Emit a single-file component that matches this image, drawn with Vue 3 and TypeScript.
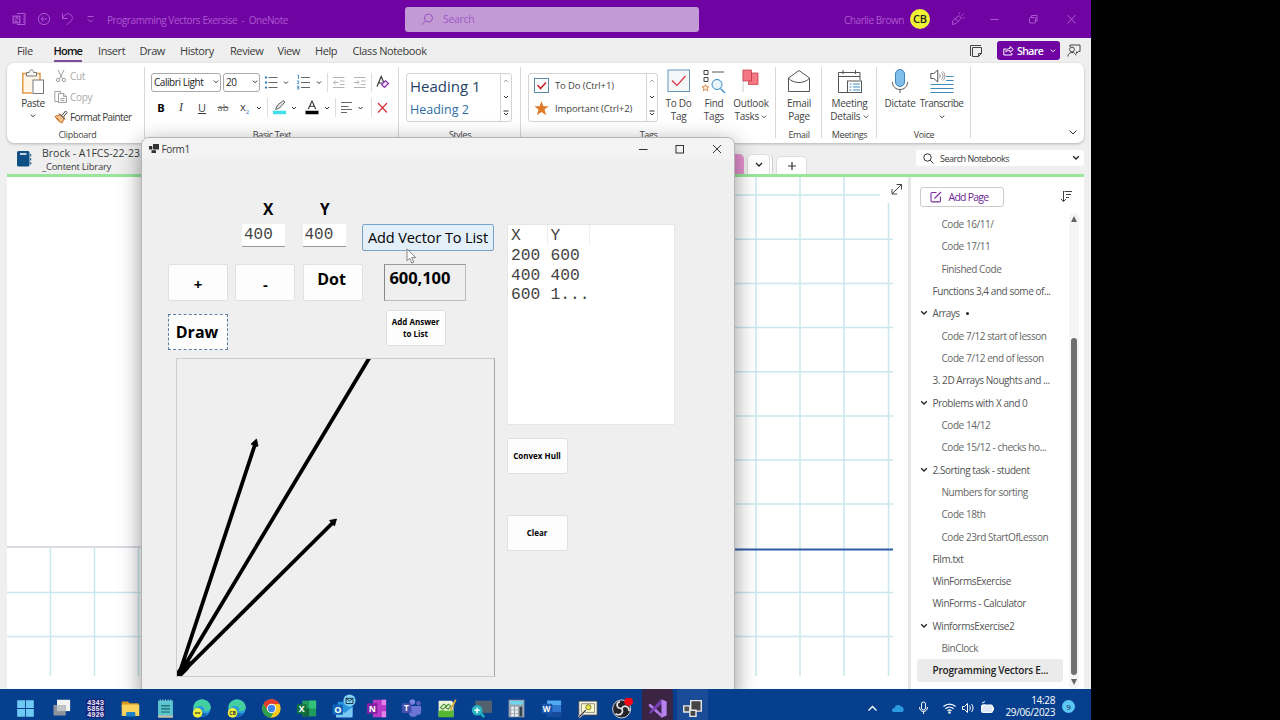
<script setup lang="ts">
interface PageRow { text: string; level: number; open?: boolean; dot?: boolean; active?: boolean }

const tabs: string[] = ['File', 'Home', 'Insert', 'Draw', 'History', 'Review', 'View', 'Help', 'Class Notebook']

const pages: PageRow[] = [
  { text: 'Code 16/11/', level: 2 },
  { text: 'Code 17/11', level: 2 },
  { text: 'Finished Code', level: 2 },
  { text: 'Functions 3,4 and some of...', level: 1 },
  { text: 'Arrays', level: 1, open: true, dot: true },
  { text: 'Code 7/12 start of lesson', level: 2 },
  { text: 'Code 7/12 end of lesson', level: 2 },
  { text: '3. 2D Arrays Noughts and ...', level: 1 },
  { text: 'Problems with X and 0', level: 1, open: true },
  { text: 'Code 14/12', level: 2 },
  { text: 'Code 15/12 - checks ho...', level: 2 },
  { text: '2.Sorting task - student', level: 1, open: true },
  { text: 'Numbers for sorting', level: 2 },
  { text: 'Code 18th', level: 2 },
  { text: 'Code 23rd StartOfLesson', level: 2 },
  { text: 'Film.txt', level: 1 },
  { text: 'WinFormsExercise', level: 1 },
  { text: 'WinForms - Calculator', level: 1 },
  { text: 'WinformsExercise2', level: 1, open: true },
  { text: 'BinClock', level: 2 },
  { text: 'Programming Vectors E...', level: 1, active: true },
]

const vectors: [string, string][] = [['200', '600'], ['400', '400'], ['600', '1...']]
const gridX: number[] = [43.5, 87.5, 131.5, 749, 793, 837]
const gridY: number[] = [18, 62.3, 106.5, 150.6, 194.8, 239, 283, 327]
</script>

<template>
  <div class="screen">
    <div class="desktop">
      <header class="titlebar">
        <svg class="quick" width="107" height="38" viewBox="0 0 107 38" fill="none" stroke="#ad58d3" stroke-width="1">
          <path d="M17 13.500h8v11h-8M25 16h-2M25 19h-2M25 22h-2" />
          <rect x="12.500" y="15.500" width="8" height="8" fill="#a44ccc" stroke="none" />
          <path d="M14.700 22v-5l3.600 5v-5" stroke="#7004a2" />
          <circle cx="44" cy="19" r="5.600" />
          <path d="M47 19h-6m2.500-2.500L41 19l2.500 2.500" />
          <path d="M62.500 13.500v5h5M62.800 18c2-4 5-5 7.500-3.500 2.800 1.800 2.500 4.500.5 6.500l-4 4" />
          <path d="M87.500 16.500h6M88 19.500l2.500 2.500 2.500-2.500" />
        </svg>
        <span class="doc-title">Programming Vectors Exersise&nbsp; -&nbsp; OneNote</span>
        <div class="search">
          <svg width="13" height="13" viewBox="0 0 13 13" fill="none" stroke="#9a51bf"><circle cx="7.500" cy="5" r="4" /><path d="M4.600 7.800L.8 11.800" /></svg>
          <span>Search</span>
        </div>
        <span class="user">Charlie Brown</span>
        <span class="avatar">CB</span>
        <svg class="caption" width="160" height="38" viewBox="931 0 160 38" fill="none" stroke="#ad58d3">
          <path d="M952 24.500l1-4 6-5 2.500 2.500-5.500 5.500zM955 18.500l3 3M959 14l1-1.500M961.500 15.500l2-2M963 18l1.500-.5" />
          <path d="M990.500 19.500h8M1067.500 15l8 8.500M1075.500 15l-8 8.500" />
          <rect x="1029.500" y="17.500" width="6" height="5.500" rx="1" /><path d="M1031.500 17v-1.500h5.500v5.500h-1.500" />
        </svg>
      </header>

      <nav class="menu">
        <div class="tabs">
          <span v-for="t in tabs" :key="t" :class="{ on: t === 'Home' }">{{ t }}</span>
        </div>
        <svg width="14" height="14" viewBox="0 0 14 14" fill="none" stroke="#444"><path d="M1.500 12V1.500H12" /><path d="M3.500 3.500h9v6l-3 3h-6zM12.500 9.500h-3v3" /></svg>
        <span class="share">
          <svg width="11" height="11" viewBox="0 0 11 11" fill="none" stroke="#fff"><path d="M3.500 4H.8v6h8V8M2.800 7c.4-2.500 2-3.500 4.200-3.500V1.500L10.300 4.500 7 7.300V5.500C5 5.400 3.800 6 2.800 7z" /></svg>
          Share
          <svg class="chev" width="6" height="4" viewBox="0 0 6 4" fill="none" stroke="#fff"><path d="M.8.600L3 2.800 5.200.600" /></svg>
        </span>
        <svg width="14" height="14" viewBox="0 0 14 14" fill="none" stroke="#444"><path d="M3 3V1h10v6.500h-1.500L9.500 9.500v-2" /><circle cx="5" cy="5.500" r="2.400" /><path d="M.8 12.500C1.200 9.700 3 8.500 5 8.500s3.500 1 4 3" /></svg>
      </nav>

      <section class="ribbon">
        <div class="group clipboard">
          <div class="body">
            <div class="paste">
              <svg width="24" height="26" viewBox="0 0 24 26" fill="none"><path d="M2 5h16.500v6h-7v13H2z" fill="#fff6e8" /><path d="M5 4.500H1.800v19.500H11" stroke="#e29a45" stroke-width="1.500" /><path d="M15 4.500h4V11" stroke="#e29a45" stroke-width="1.500" /><path d="M5.500 7V3.500h2.700c.2-3.500 4.300-3.500 4.500 0h2.800V7z" fill="#f6f6f6" stroke="#777" /><rect x="12" y="11" width="10.500" height="13.500" fill="#fff" stroke="#777" /></svg>
              <span>Paste</span>
              <svg class="chev" width="6" height="4" viewBox="0 0 6 4" fill="none" stroke="#333"><path d="M.8.600L3 2.800 5.200.600" /></svg>
            </div>
            <ul class="clip-list">
              <li class="off"><svg width="14" height="14" viewBox="0 0 14 14" fill="none" stroke="#a0a0a0"><path d="M4 .8l4.500 9M10 .8l-4.500 9" /><circle cx="4" cy="11" r="1.700" /><circle cx="10" cy="11" r="1.700" /></svg>Cut</li>
              <li class="off"><svg width="14" height="14" viewBox="0 0 14 14" fill="none" stroke="#a0a0a0"><path d="M4 11.500H.8V1.500h6v2" /><path d="M4.500 3.500h5l3 3v6h-8zM9.500 3.500v3h3M6.500 8.500h4M6.500 10.500h4" /></svg>Copy</li>
              <li class="fp"><svg width="14" height="14" viewBox="0 0 14 14" fill="none"><path d="M1 6.500l6-2 3.500 3.500L8 13 4.500 11z" fill="#f4c28c" stroke="#cf6a1c" /><path d="M5 3.500l6 6M8 5.500l3.500-4.500 1.500 1.500L9.500 7" stroke="#444" fill="#fff" /><path d="M3 8l2.500 2.500" stroke="#cf6a1c" /></svg>Format Painter</li>
            </ul>
          </div>
          <span class="label">Clipboard</span>
        </div>

        <div class="group basic">
          <div class="body col">
            <div class="trow">
              <span class="combo font">Calibri Light<svg class="chev" width="6" height="4" viewBox="0 0 6 4" fill="none" stroke="#333"><path d="M.8.600L3 2.800 5.200.600" /></svg></span>
              <span class="combo size">20<svg class="chev" width="6" height="4" viewBox="0 0 6 4" fill="none" stroke="#333"><path d="M.8.600L3 2.800 5.200.600" /></svg></span>
              <svg width="132" height="20" viewBox="262 72 132 20" fill="none" stroke="#666">
                <path d="M268.500 77.500h9M268.500 82.500h9M268.500 87.500h9M301 77.500h9M301 82.500h9M301 87.500h9" />
                <path d="M265 76.500h2v2h-2zM265 81.500h2v2h-2zM265 86.500h2v2h-2z" fill="#2d7bb8" stroke="none" />
                <path d="M297.500 75.500l1-.5v4M296.800 81h2v1.500l-1.500 1h1.700M296.800 86h2v3h-2M297 87.500h1.500" stroke="#2d7bb8" stroke-width=".8" />
                <path d="M284 81.500l2 2 2-2M317 81.500l2 2 2-2" stroke="#333" />
                <path d="M327.500 73v19M371.500 73v19" stroke="#ddd" />
                <g stroke="#b4b4b4"><path d="M333 77.500h11.500M340 81h4.500M340 84.500h4.500M333 87.500h11.500M338.500 82.500h-5m2-2l-2 2 2 2" /><path d="M354 77.500h11.500M361 81h4.500M361 84.500h4.500M354 87.500h11.500M354 82.500h5m-2-2l2 2-2 2" /></g>
                <path d="M377 86.500l4.200-10 3.500 8M378.500 83h4" stroke="#333" stroke-width="1.200" /><path d="M381.500 84.500l4-3.700 3 2.700-4 4z" fill="#f3e3fa" stroke="#8a2fb0" stroke-width="1.200" />
              </svg>
            </div>
            <div class="frow">
              <b>B</b><i>I</i><u>U</u><s>ab</s><span class="sub">x<sub>2</sub></span>
              <svg width="138" height="22" viewBox="256 97 138 22" fill="none" stroke="#333">
                <path d="M257 107l2 2 2-2M292 107l2 2 2-2M325 107l2 2 2-2M358.500 107l2 2 2-2" />
                <path d="M267.500 98v19M335.500 98v19M371.500 98v19" stroke="#ddd" />
                <path d="M273 112.500h13" stroke="#3fe0ea" stroke-width="3.500" /><path d="M275.500 109.500l2-4.500 6-4.500 1.500 1.500-5.500 6z" stroke="#666" fill="#ddd" />
                <path d="M305.500 112.500h13" stroke="#000" stroke-width="3.500" /><path d="M308.300 109l3.700-8 3.700 8M309.700 106.200h4.600" stroke-width="1.100" />
                <path d="M341 102.500h11M341 106.500h7.500M341 109.500h11M341 112.500h6" stroke="#666" />
                <path d="M378 103l9 9.500M387 103l-9 9.500" stroke="#d3303c" stroke-width="1.200" />
              </svg>
            </div>
          </div>
          <span class="label">Basic Text</span>
        </div>

        <div class="group styles">
          <div class="body">
            <div class="gallery heads">
              <div class="items"><span class="h1">Heading 1</span><span class="h2">Heading 2</span></div>
              <div class="spin"><svg v-for="n in 3" :key="n" width="8" height="8" viewBox="0 0 8 8" fill="none" :stroke="n === 1 ? '#aaa' : '#333'"><path v-if="n === 1" d="M2 5l2-2 2 2" /><path v-else-if="n === 2" d="M2 3l2 2 2-2" /><path v-else d="M1.500 2h5M2 4l2 2 2-2" /></svg></div>
            </div>
          </div>
          <span class="label">Styles</span>
        </div>

        <div class="group tags">
          <div class="body">
            <div class="gallery tagbox">
              <div class="items">
                <span class="tag"><svg width="15" height="15" viewBox="0 0 15 15" fill="none"><rect x=".5" y=".5" width="14" height="14" stroke="#5a87a8" /><path d="M3.500 7l3 3.500L12 4.500" stroke="#c8232c" stroke-width="1.600" /></svg>To Do (Ctrl+1)</span>
                <span class="tag"><svg width="15" height="15" viewBox="0 0 15 15"><path d="M7.500.3l1.900 5h5.300l-4.200 3.300 1.600 5.600-4.600-3.300-4.600 3.300 1.600-5.600L.3 5.300h5.300z" fill="#e07a28" /></svg>Important (Ctrl+2)</span>
              </div>
              <div class="spin"><svg v-for="n in 3" :key="n" width="8" height="8" viewBox="0 0 8 8" fill="none" :stroke="n === 1 ? '#aaa' : '#333'"><path v-if="n === 1" d="M2 5l2-2 2 2" /><path v-else-if="n === 2" d="M2 3l2 2 2-2" /><path v-else d="M1.500 2h5M2 4l2 2 2-2" /></svg></div>
            </div>
            <div class="big w36">
              <svg width="24" height="24" viewBox="0 0 24 24" fill="none"><rect x="1" y="1" width="21.500" height="21.500" stroke="#6597bd" fill="#f5f6f8" /><path d="M5 11.500l5 5L18.500 7" stroke="#d3303c" stroke-width="1.200" /></svg>
              <span>To Do<br>Tag</span>
            </div>
            <div class="big w35">
              <svg width="24" height="24" viewBox="0 0 24 24" fill="none"><path d="M2 1.500h4v4H2zM2 8.500h4v4H2z" stroke="#444" /><path d="M10 3h12" stroke="#555" /><circle cx="15" cy="15.500" r="5" stroke="#2f86c6" fill="#eaf5fc" /><path d="M18.500 19.500l4.500 4.500" stroke="#2f86c6" stroke-width="1.300" /><path d="M3.500 15.500l.9 2.300h2.300L5 19.300l.7 2.500-2.200-1.400-2.200 1.400.7-2.500-1.800-1.500h2.400z" stroke="#d9772a" stroke-width=".9" /></svg>
              <span>Find<br>Tags</span>
            </div>
            <div class="big w39">
              <svg width="24" height="24" viewBox="0 0 24 24"><path d="M4 1v22" stroke="#ccc" /><path d="M4 1h8.500v3H19v11.500H9.500V12H4z" fill="#f57885" stroke="#c9414f" stroke-width=".8" /><path d="M12.500 4v8h-3" fill="none" stroke="#c9414f" /></svg>
              <span>Outlook<br>Tasks <svg class="chev" width="6" height="4" viewBox="0 0 6 4" fill="none" stroke="#555"><path d="M.8.600L3 2.800 5.200.600" /></svg></span>
            </div>
          </div>
          <span class="label">Tags</span>
        </div>

        <div class="group email">
          <div class="body mid"><div class="big w46">
            <svg width="24" height="24" viewBox="0 0 24 24" fill="none" stroke="#555"><path d="M1.500 9v13.500h21V9L12 1.500zM1.500 9C6 15 18 15 22.500 9" /></svg>
            <span>Email<br>Page</span>
          </div></div>
          <span class="label">Email</span>
        </div>

        <div class="group meet">
          <div class="body mid"><div class="big">
            <svg width="26" height="24" viewBox="0 0 26 24" fill="none" stroke="#555"><path d="M10 23.500H1.500v-20h21.500V11M1.500 7.500h21.500M6 1v4M18.500 1v4" /><rect x="10.500" y="12" width="14" height="11.500" fill="#fff" /><path d="M12.500 15h2M12.500 18h2M12.500 21h2M16 15h7M16 18h7M16 21h7" stroke="#3d8fcc" /></svg>
            <span>Meeting<br>Details <svg class="chev" width="6" height="4" viewBox="0 0 6 4" fill="none" stroke="#555"><path d="M.8.600L3 2.800 5.200.600" /></svg></span>
          </div></div>
          <span class="label">Meetings</span>
        </div>

        <div class="group voice">
          <div class="body">
            <div class="big w41">
              <svg width="24" height="24" viewBox="0 0 24 24" fill="none"><rect x="7.500" y=".5" width="9" height="17" rx="4.500" fill="#7fbdea" stroke="#3d84bd" /><path d="M4.500 13c0 10 15 10 15 0M12 20.500v4" stroke="#555" /></svg>
              <span>Dictate</span>
            </div>
            <div class="big w44">
              <svg width="24" height="24" viewBox="0 0 24 24" fill="none"><path d="M.8 4.500h3l4-3.500v12l-4-3.500h-3z" stroke="#555" /><path d="M9.500 5c1 1 1 3 0 4M11.500 3.500c2 2 2 5 0 7M13 2.500c2.500 2.500 2.500 6.500 0 9" stroke="#777" stroke-width=".8" /><path d="M16 7.500h7.500M16 11.500h7.500M.5 15.500h23M.5 19.500h23M.5 23.500h23" stroke="#3f8bb8" /></svg>
              <span>Transcribe<br><svg class="chev" width="6" height="4" viewBox="0 0 6 4" fill="none" stroke="#333"><path d="M.8.600L3 2.800 5.200.600" /></svg></span>
            </div>
          </div>
          <span class="label">Voice</span>
        </div>
        <svg class="collapse" width="10" height="7" viewBox="0 0 10 7" fill="none" stroke="#333"><path d="M1.500 1.500L5 5l3.500-3.500" /></svg>
      </section>

      <div class="bookbar">
        <svg class="book" width="16" height="18" viewBox="0 0 16 18"><rect x="1" y="1" width="12.500" height="15.500" rx="1.500" fill="#0f4f86" /><path d="M4 4h6.500" stroke="#fff" stroke-width="1.500" /><path d="M14.700 4v2.500M14.700 8v2.500M14.700 12v2.500" stroke="#0f4f86" stroke-width="1" /></svg>
        <div class="bookname">Brock - A1FCS-22-23<br><small>_Content Library</small></div>
        <span class="stab pink"></span>
        <span class="stab drop"><svg width="8" height="6" viewBox="0 0 8 6" fill="none" stroke="#222" stroke-width="1.300"><path d="M1 1l3 3 3-3" /></svg></span>
        <span class="stab add"><svg width="8" height="8" viewBox="0 0 8 8" stroke="#333" stroke-width="1.200"><path d="M4 0v8M0 4h8" /></svg></span>
        <div class="nbsearch">
          <svg width="11" height="11" viewBox="0 0 11 11" fill="none" stroke="#333"><circle cx="4.500" cy="4.500" r="3.700" /><path d="M7.200 7.200l3.300 3.300" /></svg>
          <span>Search Notebooks</span>
          <svg width="8" height="6" viewBox="0 0 8 6" fill="none" stroke="#222" stroke-width="1.300"><path d="M1.200 1.200L4 4l2.800-2.800" /></svg>
        </div>
      </div>

      <main class="work">
        <div class="canvas">
          <svg width="901" height="512" viewBox="0 0 901 512" fill="none" stroke="#c9e8ee" stroke-width="1.500">
            <path v-for="y in gridY" :key="'h' + y" :d="`M727 ${y}H${y === 18 ? 873 : 886}`" />
            <path v-for="x in gridX" :key="'v' + x" :d="`M${x} ${x < 200 ? 371 : 0}V499`" />
            <path d="M881.500 26V499M0 415.500H135M0 459.500H135M727 415.500H886M727 459.500H886" />
            <path d="M0 370H135" stroke="#b9b3c6" stroke-width="1" />
            <path d="M727 372.500H886" stroke="#2f5ca6" stroke-width="2" />
            <path d="M885 17l9.500-9.500M889.500 7.500h5v5M885 12v5h5" stroke="#444" stroke-width="1" />
          </svg>
        </div>
        <aside class="pages">
          <div class="phead">
            <span class="addpage"><svg width="12" height="12" viewBox="0 0 12 12" fill="none" stroke="#7a2aa3" stroke-width="1.100"><path d="M6.500 1.500H2.200C1.500 1.500 1 2 1 2.700v7c0 .7.500 1.200 1.200 1.200h7c.7 0 1.200-.5 1.200-1.200V5.500M4.500 7.500L11 1" /></svg>Add Page</span>
            <svg width="12" height="13" viewBox="0 0 12 13" fill="none" stroke="#444"><path d="M3.500 1v10.500M1 9l2.500 2.500L6 9M4.500 1.500H12M6 4.500h5M6 7.500h3" /></svg>
          </div>
          <div class="plist">
            <ul>
              <li v-for="p in pages" :key="p.text" :class="['l' + p.level, { active: p.active, top: p.open }]">
                <svg v-if="p.open" width="8" height="6" viewBox="0 0 8 6" fill="none" stroke="#222" stroke-width="1.300"><path d="M1.200 1.200L4 4l2.800-2.800" /></svg>
                <span>{{ p.text }}</span><i v-if="p.dot"></i>
              </li>
            </ul>
            <div class="scroll"><span class="up"></span><span class="thumb"></span><span class="down"></span></div>
          </div>
        </aside>
      </main>

      <footer class="taskbar">
        <div class="apps">
          <span class="app"><svg viewBox="0 0 24 24"><path d="M2.500 2.500h9v9h-9zM12.500 2.500h9v9h-9zM2.500 12.500h9v9h-9zM12.500 12.500h9v9h-9z" fill="#6dcaf5" /></svg></span>
          <span class="app"><svg viewBox="0 0 24 24"><path d="M8 2h15v13H8z" fill="#f2f2f2" /><path d="M4 8h14v12H4z" fill="#8e949c" /><path d="M8 8h10v7H8z" fill="#bfc2c6" /></svg></span>
          <span class="app"><svg viewBox="0 0 24 24"><path d="M1.500 1.500h21v21h-21z" fill="#1b1d6e" /><g fill="#e8e8ff" font-family="Liberation Mono" font-size="8.200" font-weight="bold"><text x="2.200" y="8">4343</text><text x="2.200" y="15">5856</text><text x="2.200" y="22">4920</text></g></svg></span>
          <span class="app"><svg viewBox="0 0 24 24"><path d="M2 4h7l2 2h10v5H2z" fill="#d99a1c" /><path d="M2 7.500h20v13H2z" fill="#fbd45f" /><path d="M7 21v-3.500c0-1 .7-1.500 1.500-1.500h7.500c.8 0 1.500.5 1.500 1.500V21z" fill="#1c83c6" /></svg></span>
          <span class="app"><svg viewBox="0 0 24 24"><path d="M3.500 3h17v19h-17z" fill="#5cc4cf" /><path d="M3.500 20h17v2.500h-17z" fill="#c9bba5" /><path d="M7 9h10M7 12.500h10M7 16h10" stroke="#17616d" stroke-width="1.400" /><path d="M6 1.500v3M9 1.500v3M12 1.500v3M15 1.500v3M18 1.500v3" stroke="#8fdfe8" /></svg></span>
          <span v-for="n in 2" :key="n" class="app"><svg viewBox="0 0 24 24"><circle cx="12.500" cy="11.500" r="10" fill="#2a9de0" /><path d="M3 9c2-10 18-10 19.500 1 .4 4-3 6-8 5 2-3 0-6-4-6-3 0-6 2-7.500 5z" fill="#44cfa0" /><path d="M12 12c-1 4 2 7 8 5-4 5-10 5-13 1z" fill="#1463b5" /><circle cx="7.500" cy="17" r="5.500" fill="#edf13e" /><path v-if="n === 1" d="M4 16.500c1 2 2.500 2 3.500.5 1 1.500 2.500 1.500 3.500-.5z" fill="#222" /><text v-else x="3.700" y="19.200" font-size="6" font-weight="bold" font-family="Open Sans" fill="#333">CB</text></svg></span>
          <span class="app"><svg viewBox="0 0 24 24"><circle cx="12" cy="12" r="10.500" fill="#f9c920" /><path d="M2.900 6.700A10.500 10.500 0 0 1 21.100 6.700L12 7.500l-4.500 7z" fill="#e33b2e" /><path d="M2.900 6.700A10.500 10.500 0 0 0 11 22.500l4.500-8-8 .2z" fill="#2da04b" /><circle cx="12" cy="12" r="5.300" fill="#fff" /><circle cx="12" cy="12" r="4.200" fill="#3f83ec" /></svg></span>
          <span class="app"><svg viewBox="0 0 24 24"><path d="M7 3h16v18H7z" fill="#1f9b5c" /><path d="M15 3h8v9h-8z" fill="#32c27c" /><path d="M7 12h8v9H7z" fill="#15653a" /><rect x="1" y="7" width="11" height="11" rx="1" fill="#107340" /><text x="3" y="16" font-size="10" font-weight="bold" font-family="Open Sans" fill="#fff">X</text></svg></span>
          <span class="app wide"><svg viewBox="0 0 30 30"><path d="M9 9h17v16H9z" fill="#2b96df" /><path d="M7 15l10 7 9-7v12H7z" fill="#7cc8f5" /><rect x="3" y="12" width="12" height="12" rx="1" fill="#0f66b8" /><text x="4.800" y="21.800" font-size="10.500" font-weight="bold" font-family="Open Sans" fill="#fff">O</text><circle cx="22.500" cy="7.500" r="7" fill="#7fd3f7" /><path d="M18.500 5h8v6h-8zM18.500 5l4 3 4-3" fill="none" stroke="#123" /></svg></span>
          <span class="app"><svg viewBox="0 0 24 24"><path d="M8 2h15v20H8z" fill="#b93ac8" /><path d="M18 2h5v6h-5zM18 15h5v7h-5z" fill="#e283ec" /><rect x="1" y="6" width="12" height="12" rx="1" fill="#8421a0" /><text x="3.200" y="15.600" font-size="10" font-weight="bold" font-family="Open Sans" fill="#fff">N</text></svg></span>
          <span class="app"><svg viewBox="0 0 24 24"><circle cx="13" cy="4.500" r="3.200" fill="#7b84df" /><circle cx="20" cy="6" r="2.500" fill="#5a63c4" /><path d="M9 9h10v8c0 6-10 6-10 0zM18 9h5v7c0 4-5 4-5 1z" fill="#6c74d4" /><rect x="1" y="6" width="11" height="11" rx="1" fill="#464fb0" /><text x="3.400" y="15" font-size="9.500" font-weight="bold" font-family="Open Sans" fill="#fff">T</text></svg></span>
          <span class="app"><svg viewBox="0 0 24 24"><path d="M3 3h15l2 3v15H3z" fill="#eef5dd" /><path d="M3 15c4-3 8 2 17-2v9H3z" fill="#54b830" /><path d="M5 11l4-4 3 2-4 4zM11 11l3-4 3 2-3 4z" fill="none" stroke="#3f8e27" stroke-width="1.200" /><path d="M22.500 2l-6 12" stroke="#dba93c" stroke-width="2" /></svg></span>
          <span class="app"><svg viewBox="0 0 24 24"><path d="M5 3h19v14H5z" fill="#53616e" /><path d="M11 17l4 5" stroke="#22abb8" stroke-width="3" /><circle cx="7" cy="14" r="6" fill="#2ab7c4" /><path d="M7 11v6M4 14h6" stroke="#fff" stroke-width="1.800" /></svg></span>
          <span class="app"><svg viewBox="0 0 24 24"><path d="M3 2h18v20H3z" fill="#9aa5ae" /><path d="M4.500 3.500h15v4h-15z" fill="#6fd5ee" /><path d="M6 10h3v3H6zM10.500 10h3v3h-3zM6 14h3v3H6zM10.500 14h3v3h-3zM6 18h3v3H6zM10.500 18h3v3h-3z" fill="#eef2f5" /><path d="M15.500 10h3v11h-3z" fill="#32424f" /></svg></span>
          <span class="app"><svg viewBox="0 0 24 24"><path d="M7 3h16v18H7z" fill="#2d77cf" /><path d="M7 3h16v5H7z" fill="#52aaf0" /><path d="M7 16h16v5H7z" fill="#174a99" /><rect x="1" y="6.500" width="12" height="11.500" rx="1" fill="#1b57ad" /><text x="2" y="15.500" font-size="9" font-weight="bold" font-family="Open Sans" fill="#fff">W</text></svg></span>
          <span class="app"><svg viewBox="0 0 24 24"><path d="M2 3.500h21v16H2z" fill="#f3f3e6" stroke="#444" /><path d="M5 6.500h15v10H5z" fill="#f8f8c8" stroke="#555" stroke-width=".7" /><circle cx="13" cy="10.500" r="3" fill="#e7e43a" stroke="#444" stroke-width=".7" /><path d="M2 22l8-8" stroke="#eee" stroke-width="3" /><path d="M2 22l8-8" stroke="#333" stroke-width="1.300" /></svg></span>
          <span class="app"><svg viewBox="0 0 24 24"><circle cx="11" cy="12.500" r="10.300" fill="#26262a" stroke="#e6e6e6" stroke-width="1" /><path d="M11 12C5 12 4 6 9 4M11 12c3-5 9-2 8.500 3M11 12c3 5-2 9-7 6" fill="none" stroke="#e6e6e6" stroke-width="1.900" /><circle cx="19" cy="4" r="5" fill="#f60a14" /></svg></span>
          <span class="app vs"><svg viewBox="0 0 24 24"><path d="M2 7.500l2-1 13 12V22.500L2 9z" fill="#b07be8" /><path d="M2 16.500l14-15 1 5L4 18z" fill="#7741b5" /><path d="M16.500 1.500l6 2.500v16l-6 2.500z" fill="#b583ee" /></svg></span>
          <span class="app run"><svg viewBox="0 0 24 24"><path d="M10 3h12v12H10z" fill="#444" stroke="#e9e9e9" stroke-width="1.600" /><path d="M2 9h7v7H2z" fill="#555" stroke="#e9e9e9" stroke-width="1.600" /><path d="M9 14h7v7H9z" fill="#444" stroke="#e9e9e9" stroke-width="1.600" /></svg></span>
        </div>
        <svg class="tray" width="135" height="31" viewBox="862 689 135 31" fill="none" stroke="#fff">
          <path d="M868.500 710.500l4-4 4 4" stroke-width="1.300" />
          <path d="M894 712c-3-.5-2.500-4 .5-4 .5-3.500 5-4 6.500-1.500 3 0 4 5.500.5 5.500z" fill="#2b9be2" stroke="none" />
          <rect x="921.500" y="702" width="4" height="8" rx="2" /><path d="M919.500 707c0 6 8 6 8 0M923.500 711.500v2.500" />
          <path d="M943.500 706.500c3.500-3.300 8.500-3.300 12 0M945.500 708.700c2.300-2.200 5.700-2.200 8 0M947.500 710.800c1.200-1.100 2.800-1.100 4 0" stroke-width="1.200" /><circle cx="949.500" cy="712.500" r="1.200" fill="#fff" stroke="none" />
          <path d="M962.500 706.500h2l3-3v9l-3-3h-2zM969.500 705.500c1 1.500 1 3.500 0 5M971.500 704c2 2.500 2 5.500 0 8" />
          <rect x="981.500" y="705" width="11" height="7.500" rx="1" fill="#dfe8f5" /><path d="M993.500 707v3.500M982 703l3-1.500M981.500 709l3-5" />
        </svg>
        <div class="clock">14:28<br>29/06/2023</div>
        <span class="badge">9</span>
      </footer>

      <div class="form">
        <div class="ftitle">
          <svg width="10" height="9" viewBox="0 0 10 9" fill="#333"><path d="M4 0h6v5.500H4zM0 2h3.300v3.500H0zM2.500 6.200h4.500V9H2.500z" /></svg>
          <span>Form1</span>
          <svg class="fcap" width="82" height="10" viewBox="0 0 82 10" fill="none" stroke="#333"><path d="M0 5.500h8.500" /><rect x="37" y="1.500" width="7.500" height="7.500" /><path d="M74 1l8 8M82 1l-8 8" /></svg>
        </div>
        <div class="fbody">
          <div class="left">
            <div class="xy"><b>X</b><b>Y</b></div>
            <div class="inputs">
              <span class="inp">400</span><span class="inp">400</span>
              <span class="btn addvec">Add Vector To List</span>
            </div>
            <div class="ops">
              <span class="btn op">+</span><span class="btn op">-</span><span class="btn op dotb">Dot</span>
              <span class="answer">600,100</span>
            </div>
            <div class="draws"><span class="btn draw">Draw</span><span class="btn small addans">Add Answer<br>to List</span></div>
            <div class="plot">
              <svg width="318" height="318" viewBox="176.500 359 318 318" stroke="#000" stroke-width="3.800" fill="none">
                <path d="M178 676L255 443M178 676L332 523M178 676L370 356" />
                <path d="M256 439l-5.500 5 3 1.500 2.500 1 1.500-.5zM336 519l-7 1.500 5 5.500z" fill="#000" stroke-width=".8" />
                <path d="M176.500 677v-6l6-8 8-2-2 8-8 8z" fill="#000" stroke="none" />
              </svg>
            </div>
          </div>
          <div class="right">
            <table class="list">
              <thead><tr><th>X</th><th>Y</th></tr></thead>
              <tbody><tr v-for="v in vectors" :key="v[0]"><td>{{ v[0] }}</td><td>{{ v[1] }}</td></tr></tbody>
            </table>
            <span class="btn small hull">Convex Hull</span>
            <span class="btn small clear">Clear</span>
          </div>
        </div>
      </div>
      <svg class="cursor" width="12" height="17" viewBox="0 0 12 17"><path d="M1 .8v12l2.800-2.500 2 4.700 2-.9-2-4.500h3.900z" fill="#fff" stroke="#777" stroke-width=".9" /></svg>
    </div>
  </div>
</template>

<style scoped>
.screen { width: 1280px; height: 720px; background: #000; overflow: hidden; font-family: "Open Sans", "Noto Sans", sans-serif; font-size: 10.5px; color: #3a3a3a; }
.screen * { box-sizing: border-box; }
.desktop { position: relative; width: 1091px; height: 720px; background: #efefef; display: flex; flex-direction: column; overflow: hidden; white-space: nowrap; }
svg { display: block; flex: none; }
svg.chev { display: inline-block; vertical-align: middle; }
ul { list-style: none; margin: 0; padding: 0; }

.titlebar { height: 38px; flex: none; background: #7004a2; display: flex; align-items: center; color: #ad58d3; }
.doc-title { width: 298px; font-size: 10px; letter-spacing: -.42px; padding-top: 1px; }
.search { width: 294px; height: 25px; background: #c39bd4; border-radius: 3px; display: flex; align-items: center; gap: 9px; padding-left: 16px; color: #a05ac6; font-size: 10.5px; letter-spacing: -.3px; }
.user { margin-left: 145px; width: 66px; font-size: 10px; letter-spacing: -.45px; padding-top: 1px; }
.avatar { width: 20px; height: 20px; border-radius: 50%; background: #eef234; color: #222; font-size: 11px; font-weight: 600; line-height: 20px; text-align: center; }
.titlebar .caption { margin-left: 1px; }

.menu { height: 25px; flex: none; display: flex; align-items: center; }
.tabs { width: 969px; padding-left: 17px; display: grid; grid-template-columns: 36.500px 44.500px 41.500px 40.500px 50px 47.500px 37.500px 37.500px 100px; font-size: 11px; letter-spacing: -.42px; }
.tabs span { height: 22px; line-height: 21px; justify-self: start; }
.tabs .on { font-weight: 600; color: #111; border-bottom: 2px solid #7c4a9a; letter-spacing: -.8px; }
.share { width: 63px; height: 19px; margin: 0 7px 0 14px; background: #7004a2; color: #fff; border-radius: 3px; display: flex; align-items: center; gap: 3px; padding-left: 6px; font-size: 10.500px; font-weight: 600; letter-spacing: -.6px; }
.share .chev { margin-left: 4px; }

.ribbon { height: 80px; flex: none; margin: 0 7px; background: #fff; border-radius: 7px; display: flex; box-shadow: 0 1px 3px rgba(0,0,0,.25); position: relative; z-index: 1; }
.group { display: flex; flex-direction: column; align-items: center; position: relative; }
.group::after { content: ""; position: absolute; right: 0; top: 4px; height: 71px; width: 1px; background: #d8d8d8; }
.group .body { height: 65px; width: 100%; display: flex; }
.group .body.col { flex-direction: column; }
.group .body.mid { justify-content: center; }
.label { font-size: 9px; line-height: 13px; color: #444; letter-spacing: -.35px; }
.clipboard { width: 138px; } .basic { width: 254px; } .styles { width: 122px; } .tags { width: 255px; } .email { width: 46px; } .meet { width: 55px; } .voice { width: 94px; }
.clipboard .label { padding-left: 3px; letter-spacing: -.3px; }
.paste { width: 50px; padding: 6px 0 0 2px; display: flex; flex-direction: column; align-items: center; font-size: 10px; letter-spacing: -.4px; }
.paste span { line-height: 14px; margin-top: 1px; }
.paste .chev { margin-top: 4px; }
.clip-list { padding-top: 3px; margin-left: -3px; font-size: 10px; letter-spacing: -.3px; }
.clip-list li { height: 20.600px; display: flex; align-items: center; gap: 2px; }
.clip-list .fp { letter-spacing: -.58px; }
.off { color: #aaa; }
.trow { display: flex; align-items: center; padding-left: 6px; margin-top: 9px; height: 20px; }
.combo { height: 19px; border: 1px solid #aaa; border-radius: 3px; display: flex; align-items: center; justify-content: space-between; padding: 0 1px 0 2px; font-size: 10px; color: #222; letter-spacing: -.45px; }
.combo.font { width: 70px; } .combo.size { width: 37px; margin: 0 2px 0 2px; }
.frow { display: grid; grid-template-columns: 20px 20px 22px 20px 23px auto; width: 243px; margin: 5px 0 0 6px; height: 22px; align-items: center; text-align: center; font-size: 11px; }
.frow > * { position: relative; top: -1px; }
.frow svg { top: 0; }
.frow i { font-family: "Liberation Serif", serif; font-size: 12px; }
.frow s { font-size: 9.500px; color: #666; }
.frow b { color: #000; }
.sub sub { font-size: 6px; color: #2878b5; vertical-align: -3px; line-height: 1; }
.gallery { height: 49px; margin-top: 9.500px; border: 1px solid #d4d4d4; border-radius: 3px; display: flex; }
.heads { width: 106px; margin-left: 7px; }
.tagbox { width: 130px; margin-left: 7px; }
.items { flex: 1; display: flex; flex-direction: column; }
.spin { width: 11px; border-left: 1px solid #d4d4d4; display: grid; grid-template-rows: repeat(3, 1fr); }
.spin svg { margin: auto; }
.h1 { color: #1f4568; font-size: 15px; line-height: 24px; padding-left: 3px; }
.h2 { color: #2c6da5; font-size: 12.500px; line-height: 23px; padding-left: 3px; }
.tag { height: 24px; display: flex; align-items: center; gap: 6px; padding-left: 5px; font-size: 9.500px; color: #444; letter-spacing: -.12px; }
.big { display: flex; flex-direction: column; align-items: center; padding-top: 6px; font-size: 10px; color: #444; letter-spacing: -.25px; }
.big > span { line-height: 13px; margin-top: 3.500px; text-align: center; }
.w36 { width: 36px; margin-left: 2.500px; } .w35 { width: 35px; } .w39 { width: 39px; } .w41 { width: 46px; } .w44 { width: 37px; }
.w44 > span { margin: 4px -5px 0; letter-spacing: -.55px; }
.collapse { margin: 66px 0 0 97px; }

.bookbar { height: 31px; flex: none; display: flex; align-items: flex-end; position: relative; }
.book { margin: 0 0 6px 16px; }
.bookname { width: 693px; margin-left: 10px; height: 29px; font-size: 10.500px; line-height: 13.500px; padding-top: 2px; }
.bookname small { font-size: 9.500px; letter-spacing: -.25px; position: relative; top: -1px; }
.stab { height: 18px; background: #fff; border: 1px solid #ddd; border-bottom: 0; border-radius: 5px 5px 0 0; display: flex; align-items: center; justify-content: center; }
.stab.pink { width: 9px; height: 20px; background: #e792d0; border: 0; border-radius: 0 5px 0 0; }
.stab.drop { width: 23px; margin-left: 3px; height: 20px; box-shadow: 3px 0 0 -1px #fff, 4px 0 0 -1px #ccc; }
.stab.add { width: 31px; margin-left: 6px; }
.nbsearch { width: 168px; height: 16px; margin: 0 0 8px 109px; background: #fff; border-radius: 2px; display: flex; align-items: center; padding: 0 4px 0 7px; font-size: 9px; letter-spacing: -.48px; }
.nbsearch span { flex: 1; padding-left: 6px; }

.work { height: 515px; flex: none; margin: 0 7px; border-top: 3px solid #97e79b; background: #fff; display: flex; }
.canvas { width: 904px; border-right: 3px solid #e6e6e6; }
.pages { width: 173px; padding-left: 5.500px; }
.phead { height: 36px; display: flex; align-items: center; justify-content: space-between; padding: 3px 12px 0 3px; }
.addpage { width: 84px; height: 20px; border: 1px solid #ccc; border-radius: 3px; display: flex; align-items: center; gap: 7px; padding-left: 9px; color: #6b1f95; font-size: 10.500px; letter-spacing: -.75px; }
.plist { display: flex; }
.plist ul { width: 146px; font-size: 10px; color: #555; letter-spacing: -.44px; }
.plist li { height: 22.325px; display: flex; align-items: center; padding-left: 16px; border-radius: 3px; }
.plist li.l2 { padding-left: 25px; color: #666; }
.plist li.top { padding-left: 3px; gap: 5px; }
.plist li.active { background: #ebebeb; color: #222; font-weight: 600; letter-spacing: -.23px; }
.plist li i { width: 3px; height: 3px; border-radius: 50%; background: #222; margin-left: 1px; }
.scroll { width: 10px; height: 476px; margin-left: 6px; background: #f5f5f5; border-radius: 5px; display: flex; flex-direction: column; align-items: center; }
.up, .down { border: 3.500px solid transparent; }
.up { border-bottom: 6px solid #666; border-top: 0; margin-top: 3px; }
.thumb { width: 6px; height: 337px; margin-top: 116px; border-radius: 3px; background: #707070; }
.down { border-top: 6px solid #666; border-bottom: 0; margin-top: 4px; }

.taskbar { height: 31px; flex: none; background: #063f8e; display: flex; align-items: center; position: relative; z-index: 3; }
.apps { display: flex; padding-left: 8px; width: 862px; height: 31px; }
.app { width: 35.100px; height: 31px; display: flex; align-items: center; justify-content: center; padding-top: 7px; }
.app svg { width: 21px; height: 21px; }
.app.wide svg { width: 26px; height: 26px; margin: -3px 0 0 3px; }
.app.vs { background: #3c2445; padding-top: 7px; width: 31px; margin: 0 2px; border-radius: 3px 3px 0 0; }
.app.run { background: #1b4c97; width: 31px; margin: 0 2px; border-radius: 3px 3px 0 0; }
.clock { width: 58px; text-align: right; color: #fff; font-size: 10px; line-height: 12px; padding-top: 3px; letter-spacing: -.35px; }
.badge { width: 13px; height: 13px; margin: 4px 0 0 7px; border-radius: 50%; background: #5cc8f5; color: #124; font-size: 8px; line-height: 13px; text-align: center; }

.form { position: absolute; z-index: 2; left: 141px; top: 137px; width: 594px; height: 560px; background: #efefef; border: 1px solid #b5b5b5; border-radius: 8px 8px 0 0; box-shadow: 0 6px 22px rgba(0,0,0,.42); overflow: hidden; }
.ftitle { height: 21px; background: #f3f3f3; display: flex; align-items: center; padding-left: 6.500px; gap: 3px; font-size: 10px; letter-spacing: -.4px; }
.ftitle span { width: 474px; }
.fbody { display: flex; color: #000; }
.left { width: 365px; }
.xy { display: flex; height: 24px; margin-top: 37px; padding-left: 98px; }
.xy b { width: 56.500px; text-align: center; font-size: 15.500px; line-height: 26px; }
.inputs { display: flex; padding-left: 100px; height: 38px; margin-top: 4px; }
.inp { width: 43px; height: 23px; margin-right: 17.500px; background: #fff; border-bottom: 1px solid #999; font-family: "Liberation Mono", monospace; font-size: 16px; line-height: 22px; padding-left: 2px; color: #444; }
.btn { background: #fdfdfd; border: 1px solid #e0e0e0; border-radius: 2px; display: flex; align-items: center; justify-content: center; text-align: center; font-weight: 700; color: #000; }
.addvec { width: 132px; height: 27px; margin-left: -1px; background: #e3eff9; border-color: #7ba3c6; font-weight: 400; font-size: 14.500px; letter-spacing: -.1px; }
.ops { display: flex; padding-left: 26px; height: 50px; margin-top: 2px; }
.op { width: 60px; height: 37px; margin-right: 7.300px; font-size: 15px; padding-top: 2px; }
.dotb { padding: 0 2px 8px 0; font-size: 16px; }
.answer { width: 82px; height: 37px; margin-left: 14.500px; border: 1px solid #bbb; border-top-color: #999; border-left-color: #888; font-weight: 700; font-size: 16.500px; line-height: 25px; padding-left: 4px; letter-spacing: -.05px; }
.draws { display: flex; padding-left: 26px; height: 44px; }
.draw { width: 60px; height: 36px; font-size: 16px; border: 1px dashed #5f7da5; border-radius: 0; padding-right: 2px; }
.small { width: 61px; height: 36px; font-size: 8px; line-height: 12px; }
.addans { width: 60px; margin: -4px 0 0 158px; padding-right: 1px; }
.plot { width: 319px; height: 319px; margin-left: 33.500px; border: 1px solid #ccc; border-right-color: #a5a5a5; overflow: hidden; }
.list { width: 168px; height: 201px; margin-top: 65px; background: #fff; border: 1px solid #e6e6e6; display: block; border-spacing: 0; font-family: "Liberation Mono", monospace; font-size: 16.300px; color: #444; }
.list th, .list td { padding: 0 0 0 3px; width: 39.500px; height: 19.500px; line-height: 19px; text-align: left; font-weight: 400; }
.list th { height: 21px; border-right: 1px solid #eee; }
.right .small { padding-right: 1px; }
.hull { margin-top: 13px; }
.clear { margin-top: 41px; }
.cursor { position: absolute; z-index: 4; left: 406px; top: 248px; }
</style>

<style>
html, body { margin: 0; background: #000; overflow: hidden; }
</style>
